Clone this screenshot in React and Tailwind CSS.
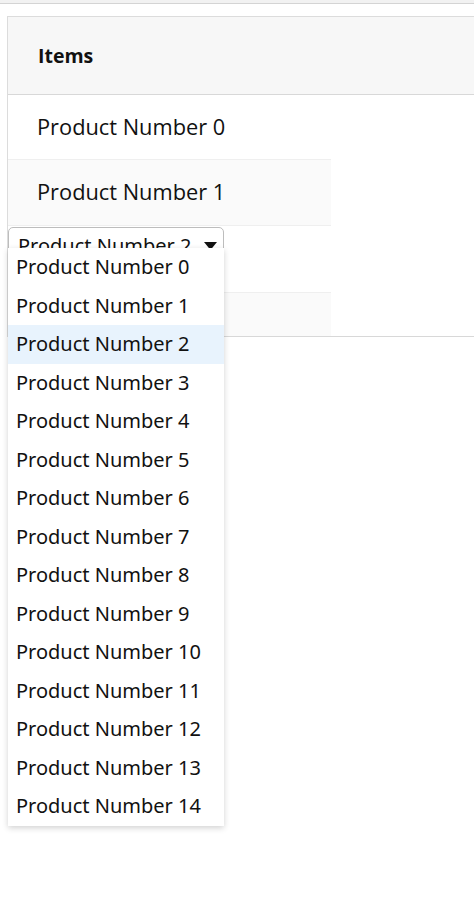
import React from 'react';

const items = Array.from({ length: 15 }, (_, i) => `Product Number ${i}`);

const App = () => {
  return (
    <div className="relative min-h-[916px] w-[474px] overflow-hidden bg-white text-[#111]" style={{ fontFamily: '"Open Sans", "Noto Sans", sans-serif' }}>
      <div className="h-[4px] bg-[#f2f2f2] border-b border-[#d4d4d4]" />
      <div className="pt-3 pl-[7px]">
        <div className="border-l border-t border-[#dcdcdc] w-[480px]">
          <div className="h-[78px] bg-[#f7f7f7] border-b border-[#d8d8d8] flex items-center pl-[30px] text-[19.5px] font-bold">
            Items
          </div>
          <div className="w-[323px]">
            <div className="h-[65px] flex items-center pl-[29px] text-[21.8px] border-b border-[#efefef]">
              Product Number 0
            </div>
            <div className="h-[66px] flex items-center pl-[29px] text-[21.8px] bg-[#fafafa] border-b border-[#efefef]">
              Product Number 1
            </div>
            <div className="h-[66px] border-b border-[#efefef]">
              <div className="w-[216px] h-[38px] mt-[1px] border border-[#bdbdbd] rounded-[5px] flex items-center justify-between pl-[9px] pr-[6px] text-[20px] bg-white" style={{ fontFamily: '"Noto Sans", sans-serif' }}>
                <span>Product Number 2</span>
                <svg width="13" height="8" viewBox="0 0 13 8"><path d="M0 0h13L6.5 8z" fill="#111" /></svg>
              </div>
            </div>
            <div className="h-[43px] bg-[#fafafa]" />
          </div>
          <div className="border-b border-[#d8d8d8]" />
        </div>
      </div>
      <div className="absolute left-[8px] top-[248px] w-[216px] bg-white shadow-[0_2px_6px_rgba(0,0,0,0.18)]" style={{ fontFamily: '"Noto Sans", sans-serif' }}>
        {items.map((t, i) => (
          <div key={t} className={`h-[38.5px] flex items-center pl-[8px] text-[20px] ${i === 2 ? 'bg-[#e8f3fd]' : ''}`}>
            {t}
          </div>
        ))}
      </div>
    </div>
  );
};

export default App;
